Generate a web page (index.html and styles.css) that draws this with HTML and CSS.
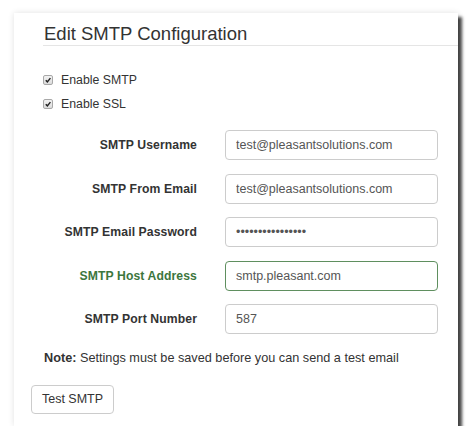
FILE: index.html
```html
<!DOCTYPE html>
<html>
<head>
<meta charset="utf-8">
<link rel="stylesheet" href="styles.css">
</head>
<body>
<div class="panel">
  <div class="header">Edit SMTP Configuration</div>
  <div class="checks">
    <div class="check-row">
      <span class="cb"><svg viewBox="0 0 10 10" width="10" height="10"><path d="M2.2 5.2 L4.2 7.3 L8 2.6" fill="none" stroke="#222" stroke-width="1.8"/></svg></span>
      <span>Enable SMTP</span>
    </div>
    <div class="check-row">
      <span class="cb"><svg viewBox="0 0 10 10" width="10" height="10"><path d="M2.2 5.2 L4.2 7.3 L8 2.6" fill="none" stroke="#222" stroke-width="1.8"/></svg></span>
      <span>Enable SSL</span>
    </div>
  </div>
  <div class="form">
    <label class="lbl">SMTP Username</label>
    <input class="field" type="text" value="test@pleasantsolutions.com">
    <label class="lbl">SMTP From Email</label>
    <input class="field" type="text" value="test@pleasantsolutions.com">
    <label class="lbl">SMTP Email Password</label>
    <input class="field" type="password" value="xxxxxxxxxxxxxxxx">
    <label class="lbl success">SMTP Host Address</label>
    <input class="field success" type="text" value="smtp.pleasant.com">
    <label class="lbl">SMTP Port Number</label>
    <input class="field" type="text" value="587">
  </div>
  <p class="note"><strong>Note:</strong> Settings must be saved before you can send a test email</p>
  <button class="btn">Test SMTP</button>
</div>
</body>
</html>
```

FILE: styles.css
```css
html, body {
  margin: 0;
  padding: 0;
  background: #ffffff;
}
body {
  font-family: "Liberation Sans", Arial, sans-serif;
  color: #333333;
}
.panel {
  margin: 13px 0 0 14px;
  width: 444px;
  box-sizing: border-box;
  padding: 9.5px 0 12px 17px;
  background: #ffffff;
  box-shadow: 4px 4px 3px rgba(0, 0, 0, 0.72), 0 0 6px rgba(0, 0, 0, 0.12);
}
.header {
  margin-left: 12px;
  font-size: 18.5px;
  line-height: 21px;
  padding: 0 0 1.5px 1px;
  border-bottom: 1px solid #e5e5e5;
  color: #333333;
}
.checks {
  margin: 22px 0 0 12px;
}
.check-row {
  display: flex;
  align-items: center;
  height: 24px;
  font-size: 12.3px;
  color: #333333;
}
.cb {
  width: 10px;
  height: 10px;
  box-sizing: border-box;
  border: 1px solid #a8a8a8;
  border-radius: 2px;
  background: linear-gradient(#f2f2f2, #dcdcdc);
  margin-right: 8px;
  display: flex;
  align-items: center;
  justify-content: center;
  margin-top: -1px;
}
.cb svg {
  display: block;
  width: 8px;
  height: 8px;
}
.form {
  margin-top: 14px;
  display: grid;
  grid-template-columns: 166px 213px;
  column-gap: 28px;
  row-gap: 13.5px;
  align-items: center;
}
.lbl {
  text-align: right;
  font-weight: bold;
  font-size: 12.2px;
  letter-spacing: 0.1px;
  color: #333333;
}
.lbl.success {
  color: #3c763d;
}
.field {
  height: 30px;
  box-sizing: border-box;
  border: 1px solid #cccccc;
  border-radius: 4px;
  padding: 0 10px;
  font-family: "Liberation Sans", Arial, sans-serif;
  font-size: 12.5px;
  color: #555555;
  background: #ffffff;
  margin: 0;
  width: 213px;
  outline: none;
}
.field.success {
  border-color: #5f8f5f;
}
.note {
  margin: 14.6px 0 0 13px;
  font-size: 12.7px;
  line-height: 18px;
  color: #333333;
}
.btn {
  margin-top: 18.4px;
  display: block;
  height: 29px;
  width: 83px;
  box-sizing: border-box;
  border: 1px solid #cccccc;
  border-radius: 4px;
  background: #ffffff;
  font-family: "Liberation Sans", Arial, sans-serif;
  font-size: 12.5px;
  color: #333333;
  padding: 0;
}
```
